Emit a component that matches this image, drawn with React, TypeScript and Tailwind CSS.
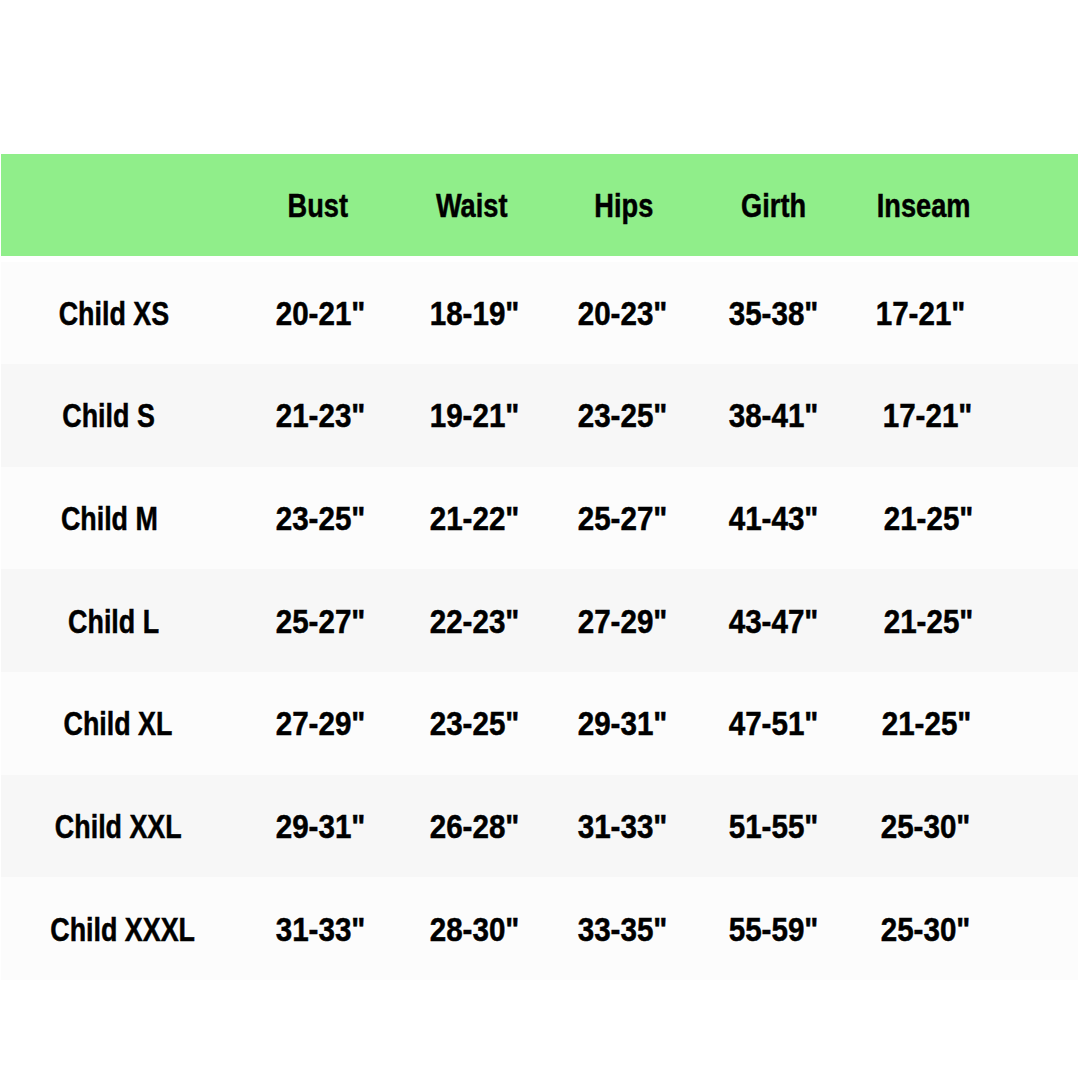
import React from "react";

type Row = { label: string; shift: string; vals: string[]; inseamShift: string };

const rows: Row[] = [
  { label: "Child XS", shift: "-translate-x-[1px]", vals: ['20-21"', '18-19"', '20-23"', '35-38"', '17-21"'], inseamShift: "-translate-x-[6px]" },
  { label: "Child S", shift: "-translate-x-[6px]", vals: ['21-23"', '19-21"', '23-25"', '38-41"', '17-21"'], inseamShift: "translate-x-[1px]" },
  { label: "Child M", shift: "-translate-x-[6px]", vals: ['23-25"', '21-22"', '25-27"', '41-43"', '21-25"'], inseamShift: "translate-x-[2px]" },
  { label: "Child L", shift: "-translate-x-[1px]", vals: ['25-27"', '22-23"', '27-29"', '43-47"', '21-25"'], inseamShift: "translate-x-[2px]" },
  { label: "Child XL", shift: "translate-x-[3px]", vals: ['27-29"', '23-25"', '29-31"', '47-51"', '21-25"'], inseamShift: "translate-x-[0px]" },
  { label: "Child XXL", shift: "translate-x-[3px]", vals: ['29-31"', '26-28"', '31-33"', '51-55"', '25-30"'], inseamShift: "-translate-x-[1px]" },
  { label: "Child XXXL", shift: "translate-x-[8px]", vals: ['31-33"', '28-30"', '33-35"', '55-59"', '25-30"'], inseamShift: "-translate-x-[1px]" },
];

const headers: { text: string; shift: string }[] = [
  { text: "Bust", shift: "-translate-x-[3px]" },
  { text: "Waist", shift: "-translate-x-[3px]" },
  { text: "Hips", shift: "translate-x-[1px]" },
  { text: "Girth", shift: "translate-x-[0px]" },
  { text: "Inseam", shift: "-translate-x-[3px]" },
];

const grid = "grid grid-cols-[228px_184px_124px_172px_130px_176px_1fr] items-center";

export default function App() {
  return (
    <div
      className="w-[1080px] h-[1080px] bg-white text-black [-webkit-text-stroke:0.5px_black]"
      style={{ fontFamily: '"Liberation Sans", Arial, sans-serif' }}
    >
      <div className="pt-[154px] pl-[1px] pr-[2px]">
        <div className={`${grid} h-[102px] bg-[#90ee8a] text-[34px] leading-none font-bold`}>
          <div />
          {headers.map((h) => (
            <div key={h.text} className="flex justify-center">
              <span className={`inline-block whitespace-nowrap scale-x-[0.8] ${h.shift}`}>{h.text}</span>
            </div>
          ))}
          <div />
        </div>
        <div className="h-[6px] bg-white" />
        {rows.map((r, i) => (
          <div
            key={r.label}
            className={`${grid} ${i === 0 ? "h-[102px]" : "h-[102.67px]"} text-[34px] leading-none font-bold ${
              i % 2 === 0 ? "bg-[#fcfcfc]" : "bg-[#f7f7f7]"
            }`}
          >
            <div className="flex justify-center">
              <span className={`inline-block whitespace-nowrap scale-x-[0.79] ${r.shift}`}>{r.label}</span>
            </div>
            {r.vals.map((v, j) => (
              <div key={j} className="flex justify-center">
                <span
                  className={`inline-block whitespace-nowrap scale-x-[0.87] ${j === 4 ? r.inseamShift : ""}`}
                >
                  {v}
                </span>
              </div>
            ))}
            <div />
          </div>
        ))}
      </div>
    </div>
  );
}
